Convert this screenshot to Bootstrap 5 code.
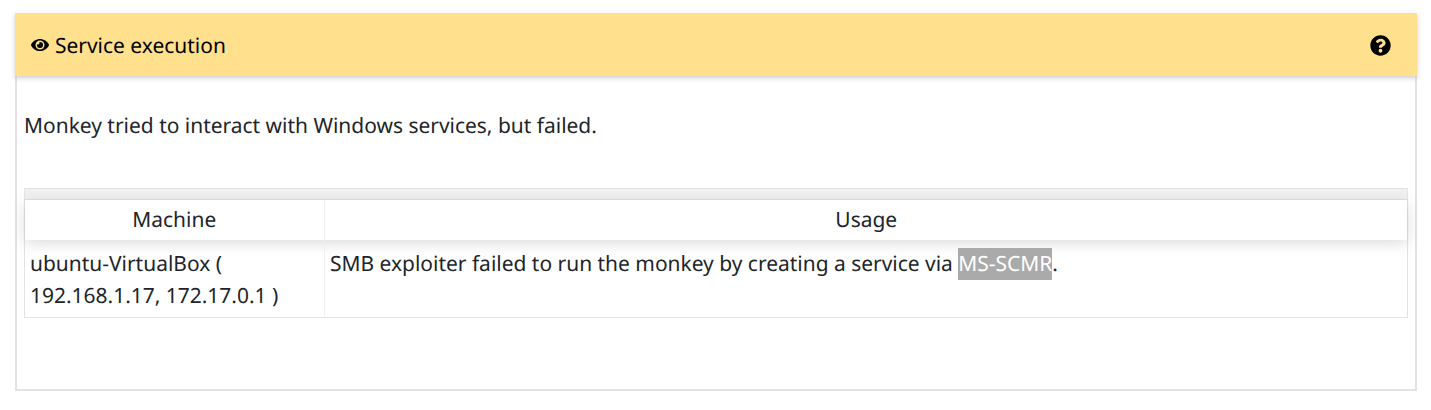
<!DOCTYPE html>
<html lang="en">
<head>
    <meta charset="UTF-8">
    <title>Service execution</title>
    <link rel="stylesheet" href="https://cdn.jsdelivr.net/npm/bootstrap@5.3.0/dist/css/bootstrap.min.css">
    <style>
        body {
            font-family: "Noto Sans", sans-serif;
            font-size: 20.96px;
            color: #212529;
            background: #fff;
            text-rendering: geometricPrecision;
        }
        .report-wrap {
            padding: 13px 14px 0 15px;
        }
        .report-card {
            border: 0;
            border-radius: 0;
        }
        .report-head {
            height: 63px;
            background: #fee08d;
            color: #000;
            border: 0;
            border-radius: 0 !important;
            padding: 4px 26px 0 16px;
            box-shadow: 0 2px 5px rgba(0, 0, 0, 0.2);
            position: relative;
        }
        .report-head .title-icon {
            width: 18px;
            height: 16px;
            margin-right: 6px;
            margin-top: -3px;
        }
        .report-head .help-icon {
            margin-top: -2px;
        }
        .report-body {
            height: 315px;
            border: 2px solid #e6e2e3;
            border-top: 0;
            padding: 35px 7px 0 7px;
        }
        .report-body p {
            line-height: 30px;
            margin-bottom: 47px;
        }
        .grid-box {
            border: 1px solid #e3e3e3;
        }
        .grid-top {
            height: 11px;
            background: #f1f1f1;
            border-bottom: 1px solid #e3e3e3;
        }
        .grid-table {
            margin: 0;
            table-layout: fixed;
            font-size: 20.96px;
        }
        .grid-table th, .grid-table td {
            padding: 5px;
            border: 0;
            font-weight: 400;
            line-height: 33px;
            color: #212529;
        }
        .grid-table thead th {
            height: 40px;
            padding: 4px 5px 3px;
            text-align: center;
        }
        .grid-table thead th:last-child {
            padding-left: 6px;
        }
        .grid-table thead {
            box-shadow: 0 3px 15px rgba(0, 0, 0, 0.15);
        }
        .grid-table th:first-child, .grid-table td:first-child {
            width: 299px;
            border-right: 1px solid #f0f0f0;
        }
        .grid-table tbody td {
            height: 77px;
            padding: 8px 5px 3px;
            line-height: 32px;
            vertical-align: top;
        }
        .grid-table tbody td:last-child {
            padding-left: 5.5px;
        }
        .proto-mark {
            background: #aaa;
            color: #fff;
            padding: 2px 0;
        }
    </style>
</head>
<body>
    <div class="report-wrap">
        <div class="card report-card">
            <div class="card-header report-head d-flex align-items-center justify-content-between">
                <div class="d-flex align-items-center">
                    <svg class="title-icon" viewBox="0 0 576 512" fill="#000"><path d="M572.52 241.4C518.29 135.59 410.93 64 288 64S57.68 135.64 3.48 241.41a32.35 32.35 0 0 0 0 29.19C57.71 376.41 165.07 448 288 448s230.32-71.64 284.52-177.41a32.35 32.35 0 0 0 0-29.19zM288 400a144 144 0 1 1 144-144 143.93 143.93 0 0 1-144 144zm0-240a95.31 95.31 0 0 0-25.31 3.79 47.85 47.85 0 0 1-66.9 66.9A95.78 95.78 0 1 0 288 160z"/></svg>
                    <span>Service execution</span>
                </div>
                <svg class="help-icon" width="21" height="21" viewBox="0 0 512 512" fill="#000"><path d="M504 256c0 137-111 248-248 248S8 393 8 256 119 8 256 8s248 111 248 248zM262.66 90c-54.5 0-89.26 22.96-116.55 63.76-3.54 5.29-2.35 12.41 2.72 16.26l34.7 26.31c5.2 3.95 12.62 3.01 16.67-2.12 17.87-22.66 30.12-35.81 57.31-35.81 20.43 0 45.7 13.15 45.7 32.96 0 14.98-12.37 22.67-32.54 33.98C247.13 238.53 216 254.94 216 296v4c0 6.63 5.37 12 12 12h56c6.63 0 12-5.37 12-12v-1.33c0-28.46 83.19-29.65 83.19-106.67 0-58-60.16-102-116.53-102zM256 338c-25.36 0-46 20.64-46 46 0 25.36 20.64 46 46 46s46-20.64 46-46c0-25.36-20.64-46-46-46z"/></svg>
            </div>
            <div class="card-body report-body">
                <p>Monkey tried to interact with Windows services, but failed.</p>
                <div class="grid-box">
                    <div class="grid-top"></div>
                    <table class="table grid-table">
                        <thead>
                            <tr>
                                <th>Machine</th>
                                <th>Usage</th>
                            </tr>
                        </thead>
                        <tbody>
                            <tr>
                                <td>ubuntu-VirtualBox ( 192.168.1.17, 172.17.0.1 )</td>
                                <td>SMB exploiter failed to run the monkey by creating a service via <span class="proto-mark">MS-SCMR</span>.</td>
                            </tr>
                        </tbody>
                    </table>
                </div>
            </div>
        </div>
    </div>
    <script src="https://cdn.jsdelivr.net/npm/bootstrap@5.3.0/dist/js/bootstrap.bundle.min.js"></script>
</body>
</html>
